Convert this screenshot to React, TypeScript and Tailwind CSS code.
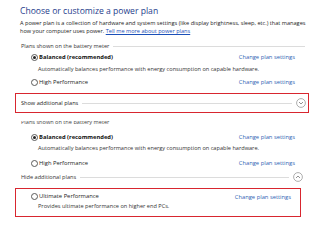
import React from "react"

function Radio({ checked }: { checked?: boolean }) {
  return (
    <span className="w-[7px] h-[7px] rounded-full border border-[#5a5a5a] bg-white flex items-center justify-center shrink-0">
      {checked && <span className="w-[3px] h-[3px] rounded-full bg-[#222]" />}
    </span>
  )
}

function ChevronCircle({ up }: { up?: boolean }) {
  return (
    <svg width="10" height="10" viewBox="0 0 10 10" className="shrink-0">
      <circle cx="5" cy="5" r="4.4" fill="white" stroke="#9a9a9a" strokeWidth="0.8" />
      <path d={up ? "M3 6 L5 4 L7 6" : "M3 4 L5 6 L7 4"} fill="none" stroke="#777" strokeWidth="0.8" />
    </svg>
  )
}

function GroupHeader({ label }: { label: string }) {
  return (
    <div className="flex items-center h-[10px] pl-[21px] pr-[31px] gap-[4px]">
      <span className="text-[5.6px] text-[#333] whitespace-nowrap">{label}</span>
      <span className="flex-1 h-px bg-[#dcdcdc]" />
    </div>
  )
}

function PlanRow({ name, bold, checked, link = true }: { name: string; bold?: boolean; checked?: boolean; link?: boolean }) {
  return (
    <div className="flex items-center h-[10px] pl-[31px] pr-[41px]">
      <Radio checked={checked} />
      <span className={`ml-[1px] text-[5.8px] whitespace-nowrap ${bold ? "font-bold text-[#111]" : "text-[#222]"}`}>{name}</span>
      <span className="flex-1" />
      {link && <span className="text-[5.8px] text-[#2f5fb3] whitespace-nowrap">Change plan settings</span>}
    </div>
  )
}

function PlanDesc({ text }: { text: string }) {
  return (
    <div className="h-[10px] flex items-center pl-[38px] text-[5.6px] text-[#333] whitespace-nowrap">{text}</div>
  )
}

export default function App() {
  const auto = "Automatically balances performance with energy consumption on capable hardware."
  return (
    <div className="w-[336px] h-[252px] bg-white overflow-hidden font-['Open_Sans',sans-serif] pt-[4px]">
      {/* Heading */}
      <div className="h-[15px] flex items-center pl-[20px] text-[8.6px] text-[#1e3c8c]">
        Choose or customize a power plan
      </div>
      <div className="pl-[20px] pr-[20px] text-[5.6px] leading-[8px] text-[#222]">
        <div className="whitespace-nowrap">
          A power plan is a collection of hardware and system settings (like display brightness, sleep, etc.) that manages
        </div>
        <div className="whitespace-nowrap">
          how your computer uses power. <span className="text-[#1a4fb8] underline">Tell me more about power plans</span>
        </div>
      </div>

      {/* Battery meter plans */}
      <div className="mt-[6px]">
        <GroupHeader label="Plans shown on the battery meter" />
        <div className="mt-[1px]">
          <PlanRow name="Balanced (recommended)" bold checked />
        </div>
        <div className="mt-[2px]">
          <PlanDesc text={auto} />
        </div>
        <div className="mt-[3px]">
          <PlanRow name="High Performance" />
        </div>
      </div>

      {/* Show additional plans (highlighted) */}
      <div className="mt-[6px] ml-[15px] w-[294px] h-[20px] border border-[#d8262f] flex items-center pl-[5px] pr-[2px] gap-[4px]">
        <span className="text-[5.6px] text-[#222] whitespace-nowrap">Show additional plans</span>
        <span className="flex-1 h-px bg-[#dcdcdc]" />
        <ChevronCircle />
      </div>

      {/* Clipped header from second capture */}
      <div className="mt-[8px] h-[6px] overflow-hidden flex items-end">
        <div className="pl-[21px] h-[10px] flex items-center text-[5.6px] text-[#444] whitespace-nowrap">
          Plans shown on the battery meter
        </div>
      </div>

      <div className="mt-[5px]">
        <PlanRow name="Balanced (recommended)" bold checked />
        <div className="mt-[1px]">
          <PlanDesc text={auto} />
        </div>
        <div className="mt-[5px]">
          <PlanRow name="High Performance" />
        </div>
      </div>

      <div className="mt-[4px] flex items-center h-[10px] pl-[21px] pr-[33px] gap-[4px]">
        <span className="text-[5.6px] text-[#333] whitespace-nowrap">Hide additional plans</span>
        <span className="flex-1 h-px bg-[#dcdcdc]" />
        <ChevronCircle up />
      </div>

      {/* Ultimate performance (highlighted) */}
      <div className="mt-[6px] ml-[15px] w-[286px] h-[29px] border border-[#d8262f] pt-[2px]">
        <div className="flex items-center h-[10px] pl-[15px] pr-[9px]">
          <Radio />
          <span className="ml-[1px] text-[5.8px] text-[#222] whitespace-nowrap">Ultimate Performance</span>
          <span className="flex-1" />
          <span className="text-[5.8px] text-[#2f5fb3] whitespace-nowrap mt-[3px]">Change plan settings</span>
        </div>
        <div className="h-[10px] flex items-center pl-[22px] text-[5.6px] text-[#333] whitespace-nowrap">
          Provides ultimate performance on higher end PCs.
        </div>
      </div>
    </div>
  )
}
